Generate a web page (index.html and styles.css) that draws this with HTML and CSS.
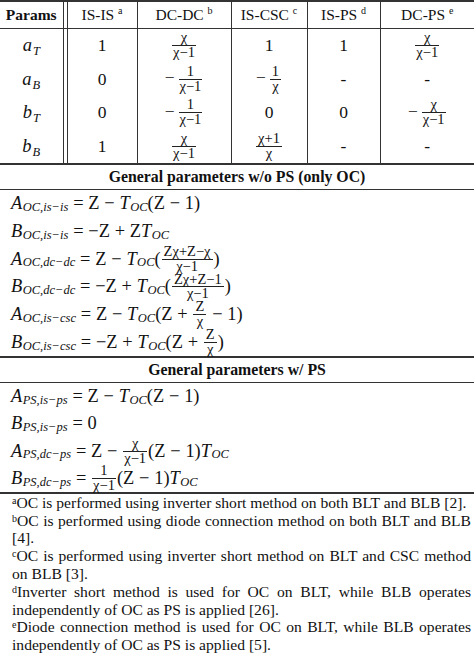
FILE: index.html
```html
<!DOCTYPE html>
<html>
<head>
<meta charset="utf-8">
<link rel="stylesheet" href="styles.css">
</head>
<body>
<div class="page">
  <table class="params">
    <colgroup>
      <col class="c-par"><col class="c-gap"><col class="c-isis"><col class="c-dcdc"><col class="c-iscsc"><col class="c-isps"><col class="c-dcps">
    </colgroup>
    <thead>
      <tr>
        <th class="pcol bold">Params</th><th class="gap"></th>
        <th>IS-IS <sup class="fn">a</sup></th>
        <th>DC-DC <sup class="fn">b</sup></th>
        <th>IS-CSC <sup class="fn">c</sup></th>
        <th>IS-PS <sup class="fn">d</sup></th>
        <th class="last">DC-PS <sup class="fn">e</sup></th>
      </tr>
    </thead>
    <tbody>
      <tr>
        <td class="pcol"><i class="v">a</i><i class="vsub">T</i></td><td class="gap"></td>
        <td>1</td>
        <td><span class="frac"><span class="num">χ</span><span class="den">χ−1</span></span></td>
        <td>1</td>
        <td>1</td>
        <td class="last"><span class="frac"><span class="num">χ</span><span class="den">χ−1</span></span></td>
      </tr>
      <tr>
        <td class="pcol"><i class="v">a</i><i class="vsub">B</i></td><td class="gap"></td>
        <td>0</td>
        <td><span class="neg">−</span><span class="frac"><span class="num">1</span><span class="den">χ−1</span></span></td>
        <td><span class="neg">−</span><span class="frac"><span class="num">1</span><span class="den">χ</span></span></td>
        <td>-</td>
        <td class="last">-</td>
      </tr>
      <tr>
        <td class="pcol"><i class="v">b</i><i class="vsub">T</i></td><td class="gap"></td>
        <td>0</td>
        <td><span class="neg">−</span><span class="frac"><span class="num">1</span><span class="den">χ−1</span></span></td>
        <td>0</td>
        <td>0</td>
        <td class="last"><span class="neg">−</span><span class="frac"><span class="num">χ</span><span class="den">χ−1</span></span></td>
      </tr>
      <tr>
        <td class="pcol"><i class="v">b</i><i class="vsub">B</i></td><td class="gap"></td>
        <td>1</td>
        <td><span class="frac"><span class="num">χ</span><span class="den">χ−1</span></span></td>
        <td><span class="frac"><span class="num">χ+1</span><span class="den">χ</span></span></td>
        <td>-</td>
        <td class="last">-</td>
      </tr>
    </tbody>
  </table>

  <section class="block">
    <div class="sechead">General parameters w/o PS (only OC)</div>
    <div class="eqs six">
      <div class="eq"><i>A</i><i class="sub">OC,is−is</i><span class="op">=</span>Z<span class="op">−</span><i>T</i><i class="sub">OC</i>(Z<span class="op">−</span>1)</div>
      <div class="eq"><i>B</i><i class="sub">OC,is−is</i><span class="op">=</span>−Z<span class="op">+</span>Z<i>T</i><i class="sub">OC</i></div>
      <div class="eq"><i>A</i><i class="sub">OC,dc−dc</i><span class="op">=</span>Z<span class="op">−</span><i>T</i><i class="sub">OC</i>(<span class="frac"><span class="num">Zχ+Z−χ</span><span class="den">χ−1</span></span>)</div>
      <div class="eq"><i>B</i><i class="sub">OC,dc−dc</i><span class="op">=</span>−Z<span class="op">+</span><i>T</i><i class="sub">OC</i>(<span class="frac"><span class="num">Zχ+Z−1</span><span class="den">χ−1</span></span>)</div>
      <div class="eq"><i>A</i><i class="sub">OC,is−csc</i><span class="op">=</span>Z<span class="op">−</span><i>T</i><i class="sub">OC</i>(Z<span class="op">+</span><span class="frac"><span class="num">Z</span><span class="den">χ</span></span><span class="op">−</span>1)</div>
      <div class="eq"><i>B</i><i class="sub">OC,is−csc</i><span class="op">=</span>−Z<span class="op">+</span><i>T</i><i class="sub">OC</i>(Z<span class="op">+</span><span class="frac"><span class="num">Z</span><span class="den">χ</span></span>)</div>
    </div>
  </section>

  <section class="block">
    <div class="sechead">General parameters w/ PS</div>
    <div class="eqs four">
      <div class="eq"><i>A</i><i class="sub">PS,is−ps</i><span class="op">=</span>Z<span class="op">−</span><i>T</i><i class="sub">OC</i>(Z<span class="op">−</span>1)</div>
      <div class="eq"><i>B</i><i class="sub">PS,is−ps</i><span class="op">=</span>0</div>
      <div class="eq"><i>A</i><i class="sub">PS,dc−ps</i><span class="op">=</span>Z<span class="op">−</span><span class="frac"><span class="num">χ</span><span class="den">χ−1</span></span>(Z<span class="op">−</span>1)<i>T</i><i class="sub">OC</i></div>
      <div class="eq"><i>B</i><i class="sub">PS,dc−ps</i><span class="op">=</span><span class="frac"><span class="num">1</span><span class="den">χ−1</span></span>(Z<span class="op">−</span>1)<i>T</i><i class="sub">OC</i></div>
    </div>
  </section>

  <div class="notes">
    <p><sup>a</sup>OC is performed using inverter short method on both BLT and BLB [2].</p>
    <p><sup>b</sup>OC is performed using diode connection method on both BLT and BLB [4].</p>
    <p><sup>c</sup>OC is performed using inverter short method on BLT and CSC method on BLB [3].</p>
    <p><sup>d</sup>Inverter short method is used for OC on BLT, while BLB operates independently of OC as PS is applied [26].</p>
    <p><sup>e</sup>Diode connection method is used for OC on BLT, while BLB operates independently of OC as PS is applied [5].</p>
  </div>
</div>
</body>
</html>
```

FILE: styles.css
```css
html, body {
  margin: 0;
  padding: 0;
  background: #fff;
}
body {
  font-family: "Liberation Serif", "Times New Roman", serif;
  color: #111;
}
.page {
  width: 474px;
  height: 654px;
  overflow: hidden;
}
.params {
  width: 474px;
  table-layout: fixed;
  border-collapse: collapse;
  border-top: 2px solid #333;
  border-bottom: 2px solid #333;
}
.c-par { width: 63px; }
.c-gap { width: 4px; }
.c-isis { width: 70px; }
.c-dcdc { width: 94px; }
.c-iscsc { width: 76px; }
.c-isps { width: 73px; }
.c-dcps { width: 94px; }
.params th, .params td {
  padding: 0;
  text-align: center;
  vertical-align: middle;
  border-right: 1px solid #333;
  font-size: 17.5px;
}
.params th.last, .params td.last { border-right: none; }
.params th {
  font-weight: normal;
  height: 26px;
  font-size: 15.5px;
  border-bottom: 1px solid #333;
}
.params th.bold { font-weight: bold; }
.params td { height: 33.5px; }
.params .gap { border-right: 1px solid #333; }
.fn {
  font-size: 10px;
  vertical-align: 6px;
  line-height: 0;
}
.v { font-size: 18.5px; }
.vsub {
  font-size: 12.5px;
  position: relative;
  top: 4px;
  margin-left: 1px;
}
.sub {
  font-size: 0.68em;
  position: relative;
  top: 0.3em;
  margin-left: 0.04em;
}
.frac {
  display: inline-flex;
  flex-direction: column;
  align-items: stretch;
  vertical-align: middle;
  font-size: 14.5px;
  line-height: 11.8px;
  text-align: center;
  margin: 0 1px;
}
.num {
  border-bottom: 1px solid #222;
  padding: 0 2px 1px;
}
.den { padding: 1px 1px 0; }
.neg { margin-right: 3px; }
.block {
  border-bottom: 2px solid #333;
}
.sechead {
  height: 24px;
  border-bottom: 1px solid #333;
  display: flex;
  align-items: center;
  justify-content: center;
  font-weight: bold;
  font-size: 15.8px;
}
.eqs {
  display: flex;
  flex-direction: column;
}
.eq {
  display: flex;
  align-items: center;
  white-space: pre;
  padding-left: 11px;
  font-size: 18.4px;
}
.six .eq { height: 27.7px; }
.four .eq { height: 27.2px; }
.op { margin: 0 0.26em; }
.notes {
  padding: 0 3px 0 12px;
  font-size: 15.6px;
  line-height: 17.8px;
  text-align: justify;
}
.notes p { margin: 0; }
.notes sup {
  font-size: 10px;
  vertical-align: 4px;
  line-height: 0;
}
```
